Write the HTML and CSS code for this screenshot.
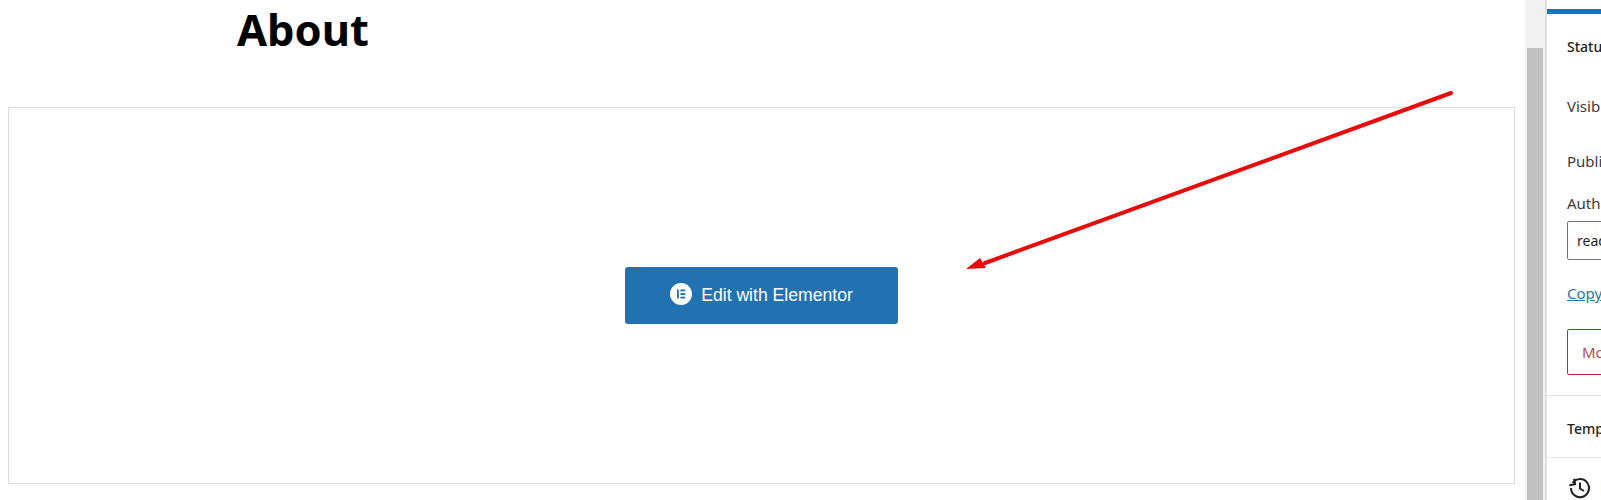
FILE: index.html
```html
<!DOCTYPE html>
<html lang="en">
<head>
<meta charset="utf-8">
<title>About</title>
<link rel="stylesheet" href="styles.css">
</head>
<body>
<div class="app">
  <main class="editor">
    <h1 class="title">About</h1>
    <section class="placeholder">
      <a class="edit-btn" href="#">
        <svg class="el-icon" viewBox="0 0 22 22" aria-hidden="true">
          <circle cx="11" cy="11" r="11" fill="#fff"/>
          <rect x="7" y="6.5" width="1.8" height="9" fill="#2271b1"/>
          <rect x="10.4" y="6.5" width="4.8" height="1.8" fill="#2271b1"/>
          <rect x="10.4" y="10.1" width="4.8" height="1.8" fill="#2271b1"/>
          <rect x="10.4" y="13.7" width="4.8" height="1.8" fill="#2271b1"/>
        </svg>
        <span>Edit with Elementor</span>
      </a>
    </section>
  </main>
  <div class="scrollbar"><div class="thumb"></div></div>
  <aside class="sidebar">
    <div class="tab-line"></div>
    <section class="panel">
      <h2 class="panel-title status">Status &amp; visibility</h2>
      <p class="row visibility">Visibility</p>
      <p class="row publish">Publish</p>
      <p class="row author">Author</p>
      <div class="select">readymade</div>
      <a class="copy" href="#">Copy link</a>
      <button class="trash">Move to trash</button>
    </section>
    <section class="panel-head">
      <h2 class="panel-title">Template</h2>
    </section>
    <section class="revisions">
      <svg class="rev-icon" viewBox="0 0 24 24" aria-hidden="true">
        <path d="M4.6 7A9 9 0 1 1 3 12" fill="none" stroke="#1e1e1e" stroke-width="2"/>
        <path d="M1 8.8 H6.8 V3.2" fill="none" stroke="#1e1e1e" stroke-width="2" transform="rotate(-10 4 7)"/>
        <path d="M12 6.5 V12.5 L16 15" fill="none" stroke="#1e1e1e" stroke-width="2"/>
      </svg>
      <span class="rev-text">Revisions</span>
    </section>
  </aside>
</div>
<svg class="arrow" viewBox="0 0 1601 500" aria-hidden="true">
  <path d="M1451 93 L985 263" fill="none" stroke="#e80b0b" stroke-width="4" stroke-linecap="round"/>
  <path d="M966 269 L980 258 L986 268 Z" fill="#e80b0b"/>
</svg>
</body>
</html>
```

FILE: styles.css
```css
* { box-sizing: border-box; }
html, body { margin: 0; height: 100%; overflow: hidden; background: #fff; }
body { font-family: "Noto Sans", "Open Sans", sans-serif; color: #1e1e1e; position: relative; }

.app { display: flex; height: 500px; width: 1601px; }

.editor { width: 1525px; flex: none; padding: 0 10px 0 8px; display: flex; flex-direction: column; }
.title {
  margin: 0 0 0 229px;
  height: 107px;
  font-size: 43.5px;
  line-height: 58px;
  font-weight: 700;
  color: #000;
}
.placeholder {
  height: 377px;
  flex: none;
  border: 1px solid #dcdcde;
  display: flex;
  align-items: center;
  justify-content: center;
}
.edit-btn {
  width: 273px;
  height: 57px;
  margin-bottom: 1px;
  display: flex;
  align-items: center;
  justify-content: center;
  gap: 9px;
  background: #2271b1;
  border-radius: 3px;
  color: #fff;
  text-decoration: none;
  font-family: "Liberation Sans", Arial, sans-serif;
  font-size: 17.6px;
}
.el-icon { width: 22px; height: 22px; flex: none; margin-top: -3px; }

.scrollbar { width: 21px; flex: none; background: #f1f1f1; padding: 48px 2px 0; border-right: 1px solid #e0e0e0; }
.thumb { height: 100%; background: #c1c1c1; }

.sidebar { flex: 1; min-width: 0; overflow: hidden; border-left: 1px solid #e0e0e0; font-size: 15px; white-space: nowrap; }
.tab-line { height: 5px; margin-top: 9px; background: #007cba; }

.panel { padding: 0 0 0 20px; height: 382px; border-bottom: 1px solid #e0e0e0; }
.panel-title { margin: 0; font-size: 14px; font-weight: 500; line-height: 20px; color: #1e1e1e; }
.status { padding-top: 23px; }
.row { margin: 0; line-height: 20px; color: #3a3a3a; }
.visibility { margin-top: 39px; }
.publish { margin-top: 35px; }
.author { margin-top: 22px; }
.select {
  margin-top: 8px;
  width: 200px;
  height: 39px;
  border: 1px solid #757575;
  border-radius: 2px;
  padding-left: 9px;
  font-size: 14px;
  line-height: 37px;
}
.copy { display: block; margin-top: 23px; line-height: 20px; color: #2b7a99; text-decoration: underline; }
.trash {
  display: block;
  margin-top: 26px;
  width: 200px;
  height: 46px;
  border: 1px solid #b32d2e;
  border-radius: 2px;
  background: #fff;
  color: #b05050;
  font: inherit;
  text-align: left;
  padding-left: 14px;
}
.panel-head { height: 62px; padding: 23px 0 0 20px; border-bottom: 1px solid #e0e0e0; }
.revisions { display: flex; align-items: center; gap: 8px; padding: 18px 0 0 21px; }
.rev-icon { width: 24px; height: 24px; flex: none; }
.rev-text { line-height: 24px; }

.arrow { position: absolute; left: 0; top: 0; width: 1601px; height: 500px; pointer-events: none; }
```
